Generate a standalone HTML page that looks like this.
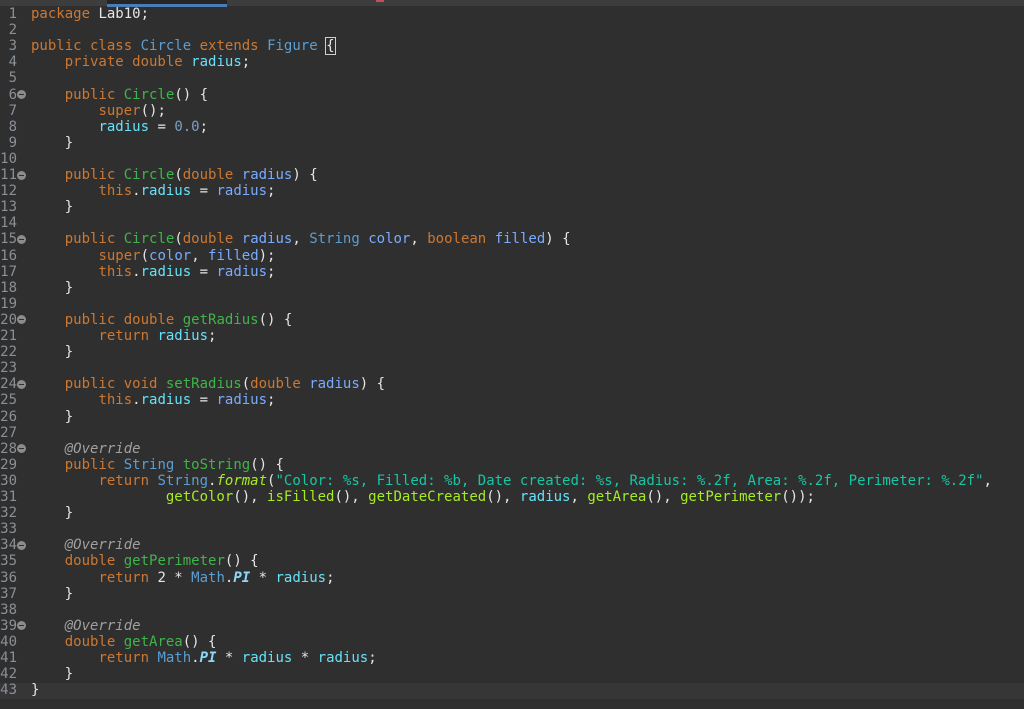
<!DOCTYPE html>
<html><head><meta charset="utf-8"><style>
body{margin:0;width:1024px;height:709px;background:#2f2f2f;overflow:hidden;position:relative;font-family:"DejaVu Sans Mono","Liberation Mono",monospace;font-size:14px;}
.top{position:absolute;left:0;top:0;width:1024px;height:6px;background:#3d3d3d;}
.tab{position:absolute;left:107px;top:0;width:120px;height:6px;background:#262626;}
.tabl{position:absolute;left:107px;top:4px;width:120px;height:3px;background:#4a7db6;}
.red{position:absolute;left:376px;top:0;width:8px;height:2px;background:#c0505a;}
.cur{position:absolute;left:0;top:683px;width:1024px;height:16px;background:#363636;}
.ln{position:absolute;left:0;width:17px;text-align:right;color:#8a9096;height:16px;line-height:16px;}
.code{position:absolute;left:31px;white-space:pre;color:#e6e6e6;height:16px;line-height:16px;}
.f{position:absolute;left:17px;width:9px;height:9px;border-radius:50%;background:#8c8c8c;}
.f::after{content:"";position:absolute;left:2px;top:4px;width:5px;height:1px;background:#2f2f2f;}
.k{color:#cc7832}.c{color:#5a9fd4}.m{color:#3eb54a}.fd{color:#66e1f8}.p{color:#79abff}
.mc{color:#a7ec21}.s{color:#17c6a3}.n{color:#7f9fbf}.a{color:#a0a0a0;font-style:italic}
.st{color:#8dd8f8;font-style:italic;font-weight:bold}.it{font-style:italic;color:#a7ec21}
.br{outline:1px solid #cfcfcf}
</style></head><body>
<div class="top"></div><div class="tab"></div><div class="tabl"></div><div class="red"></div>
<div class="cur"></div>
<div id="c"></div>
<script>
var L=[
'<span class="k">package</span> Lab10;',
'',
'<span class="k">public class</span> <span class="c">Circle</span> <span class="k">extends</span> <span class="c">Figure</span> <span class="br">{</span>',
'    <span class="k">private double</span> <span class="fd">radius</span>;',
'',
'    <span class="k">public</span> <span class="m">Circle</span>() {',
'        <span class="k">super</span>();',
'        <span class="fd">radius</span> = <span class="n">0.0</span>;',
'    }',
'',
'    <span class="k">public</span> <span class="m">Circle</span>(<span class="k">double</span> <span class="p">radius</span>) {',
'        <span class="k">this</span>.<span class="fd">radius</span> = <span class="p">radius</span>;',
'    }',
'',
'    <span class="k">public</span> <span class="m">Circle</span>(<span class="k">double</span> <span class="p">radius</span>, <span class="c">String</span> <span class="p">color</span>, <span class="k">boolean</span> <span class="p">filled</span>) {',
'        <span class="k">super</span>(<span class="p">color</span>, <span class="p">filled</span>);',
'        <span class="k">this</span>.<span class="fd">radius</span> = <span class="p">radius</span>;',
'    }',
'',
'    <span class="k">public double</span> <span class="m">getRadius</span>() {',
'        <span class="k">return</span> <span class="fd">radius</span>;',
'    }',
'',
'    <span class="k">public void</span> <span class="m">setRadius</span>(<span class="k">double</span> <span class="p">radius</span>) {',
'        <span class="k">this</span>.<span class="fd">radius</span> = <span class="p">radius</span>;',
'    }',
'',
'    <span class="a">@Override</span>',
'    <span class="k">public</span> <span class="c">String</span> <span class="m">toString</span>() {',
'        <span class="k">return</span> <span class="c">String</span>.<span class="it">format</span>(<span class="s">"Color: %s, Filled: %b, Date created: %s, Radius: %.2f, Area: %.2f, Perimeter: %.2f"</span>,',
'                <span class="mc">getColor</span>(), <span class="mc">isFilled</span>(), <span class="mc">getDateCreated</span>(), <span class="fd">radius</span>, <span class="mc">getArea</span>(), <span class="mc">getPerimeter</span>());',
'    }',
'',
'    <span class="a">@Override</span>',
'    <span class="k">double</span> <span class="m">getPerimeter</span>() {',
'        <span class="k">return</span> 2 * <span class="c">Math</span>.<span class="st">PI</span> * <span class="fd">radius</span>;',
'    }',
'',
'    <span class="a">@Override</span>',
'    <span class="k">double</span> <span class="m">getArea</span>() {',
'        <span class="k">return</span> <span class="c">Math</span>.<span class="st">PI</span> * <span class="fd">radius</span> * <span class="fd">radius</span>;',
'    }',
'}'];
var folds=[6,11,15,20,24,28,34,39];
var h='';
for(var i=0;i<L.length;i++){var y=6+i*16.1;
h+='<div class="ln" style="top:'+y+'px">'+(i+1)+'</div><div class="code" style="top:'+y+'px">'+L[i]+'</div>';
if(folds.indexOf(i+1)>=0)h+='<div class="f" style="top:'+(y+3.5)+'px"></div>';}
document.getElementById('c').innerHTML=h;
</script>
</body></html>
